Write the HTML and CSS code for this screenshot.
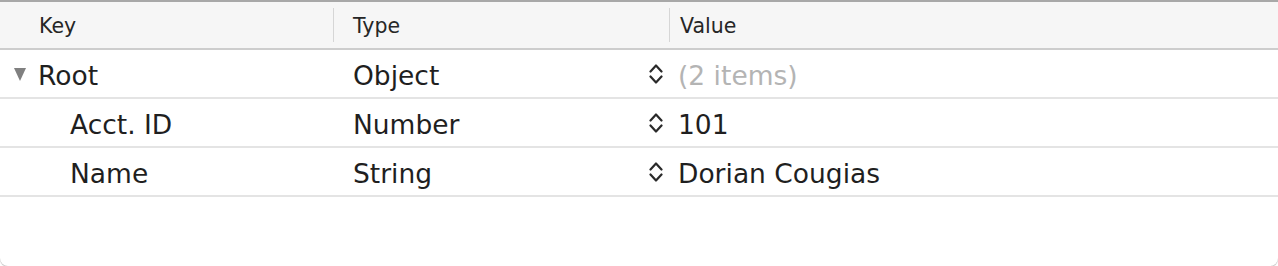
FILE: index.html
```html
<!DOCTYPE html>
<html>
<head>
<meta charset="utf-8">
<link rel="stylesheet" href="styles.css">
</head>
<body>
<div class="plist">
  <div class="header">
    <div class="hcell hkey">Key</div>
    <div class="hcell htype">Type</div>
    <div class="hcell hvalue">Value</div>
  </div>
  <div class="row">
    <div class="key root"><span class="disclosure"></span>Root</div>
    <div class="type">Object</div>
    <div class="value"><svg class="stepper" viewBox="0 0 14 22" width="14" height="22"><path d="M1.5 8.5 L7 2.5 L12.5 8.5 M1.5 13.5 L7 19.5 L12.5 13.5" fill="none" stroke="#2a2a2a" stroke-width="2.2" stroke-linecap="round" stroke-linejoin="round"/></svg><span class="muted">(2 items)</span></div>
  </div>
  <div class="row">
    <div class="key child">Acct. ID</div>
    <div class="type">Number</div>
    <div class="value"><svg class="stepper" viewBox="0 0 14 22" width="14" height="22"><path d="M1.5 8.5 L7 2.5 L12.5 8.5 M1.5 13.5 L7 19.5 L12.5 13.5" fill="none" stroke="#2a2a2a" stroke-width="2.2" stroke-linecap="round" stroke-linejoin="round"/></svg><span>101</span></div>
  </div>
  <div class="row">
    <div class="key child">Name</div>
    <div class="type">String</div>
    <div class="value"><svg class="stepper" viewBox="0 0 14 22" width="14" height="22"><path d="M1.5 8.5 L7 2.5 L12.5 8.5 M1.5 13.5 L7 19.5 L12.5 13.5" fill="none" stroke="#2a2a2a" stroke-width="2.2" stroke-linecap="round" stroke-linejoin="round"/></svg><span>Dorian Cougias</span></div>
  </div>
</div>
</body>
</html>
```
FILE: styles.css
```css
html, body {
  margin: 0;
  padding: 0;
  background: #ffffff;
}
body {
  font-family: "DejaVu Sans", "Noto Sans", sans-serif;
  color: #1f1f1f;
}
.plist {
  width: 1278px;
  height: 266px;
  box-sizing: border-box;
  background: #ffffff;
  border-radius: 0 0 8px 8px;
  box-shadow: 0 1px 1px rgba(0,0,0,0.25);
  overflow: hidden;
}
.header {
  display: flex;
  align-items: center;
  height: 50px;
  box-sizing: border-box;
  background: #f6f6f6;
  border-top: 2px solid #a8a8a8;
  border-bottom: 2px solid #cdcdcd;
  font-size: 20.5px;
  color: #262626;
}
.hcell {
  height: 34px;
  display: flex;
  align-items: center;
  box-sizing: border-box;
  padding-top: 1px;
}
.hkey {
  width: 334px;
  padding-left: 39px;
  border-right: 1px solid #d6d6d6;
}
.htype {
  width: 336px;
  padding-left: 19px;
  border-right: 1px solid #d6d6d6;
}
.hvalue {
  flex: 1;
  padding-left: 10px;
}
.row {
  display: flex;
  align-items: center;
  height: 49px;
  box-sizing: border-box;
  border-bottom: 2px solid #e4e4e4;
  padding-top: 4px;
  font-size: 26.5px;
}
.key {
  width: 333px;
  display: flex;
  align-items: center;
  box-sizing: border-box;
}
.key.root {
  padding-left: 14px;
}
.key.child {
  padding-left: 70px;
}
.disclosure {
  width: 0;
  height: 0;
  border-left: 6px solid transparent;
  border-right: 6px solid transparent;
  border-top: 13px solid #808080;
  margin-right: 12px;
  margin-top: -2px;
}
.type {
  width: 316px;
  padding-left: 20px;
  box-sizing: border-box;
}
.value {
  flex: 1;
  display: flex;
  align-items: center;
}
.stepper {
  margin-right: 15px;
  margin-top: -4px;
  flex: none;
}
.muted {
  color: #b4b4b4;
}
```
